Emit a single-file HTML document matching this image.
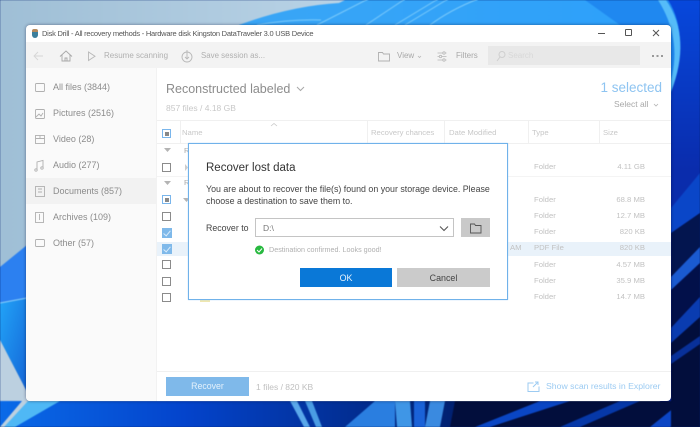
<!DOCTYPE html>
<html><head><meta charset="utf-8"><style>
*{box-sizing:border-box;margin:0;padding:0}
html,body{width:700px;height:427px;overflow:hidden;background:#02206e}
body{font-family:"Liberation Sans",sans-serif;position:relative}
#bg{position:absolute;left:0;top:0;filter:blur(.6px)}
#win{position:absolute;left:26px;top:25px;width:645px;height:376px;background:#fff;border-radius:4px;overflow:hidden;box-shadow:0 0 3px rgba(0,0,40,.45);filter:blur(.3px)}
.t{position:absolute;white-space:nowrap;line-height:12px}
.a{position:absolute}
svg{position:absolute;overflow:visible}
.side{font-size:9px;color:#8c8c8c}
.rowt{font-size:7.7px;color:#c2c2c2}
.cb{position:absolute;left:162px;width:9px;height:9px;border:1.2px solid #8b8b8b;background:#fff}
.cbb{border:1.2px solid #7ab6ec;background:#fff}
.cbb i{position:absolute;left:1.5px;top:1.5px;width:4px;height:4px;background:#888}
.cbc{border:0;background:#7fb9ea;width:10px;height:10px}
.cbc:after{content:"";position:absolute;left:3px;top:1px;width:3px;height:6px;border:solid #d9ecfb;border-width:0 1.2px 1.2px 0;transform:rotate(40deg)}
</style></head><body>
<svg id="bg" width="700" height="427" viewBox="0 0 700 427">
<defs>
<linearGradient id="lt" x1="0" y1="0" x2="1" y2="0"><stop offset="0" stop-color="#9fbfd6"/><stop offset=".55" stop-color="#bcd5e8"/><stop offset="1" stop-color="#c2d8ea"/></linearGradient>
<linearGradient id="rt" x1="0" y1="0" x2="0" y2="1"><stop offset="0" stop-color="#0748dc"/><stop offset=".4" stop-color="#0a2cac"/><stop offset="1" stop-color="#0a2aa8"/></linearGradient>
<linearGradient id="bot" x1="0" y1="0" x2="1" y2="0"><stop offset="0" stop-color="#0a6ae8"/><stop offset=".4" stop-color="#0444cc"/><stop offset="1" stop-color="#01206e"/></linearGradient>
<linearGradient id="bl" x1="0" y1="0" x2="1" y2="0"><stop offset="0" stop-color="#3aa6f6"/><stop offset="1" stop-color="#2ca0fb"/></linearGradient>
<linearGradient id="lo" x1="0" y1="0" x2="1" y2="1"><stop offset="0" stop-color="#22a4f8"/><stop offset="1" stop-color="#1464d6"/></linearGradient>
</defs>
<rect width="700" height="427" fill="url(#lt)"/>
<!-- top bloom -->
<rect x="660" y="0" width="40" height="427" fill="url(#rt)"/>
<path d="M239 25 Q290 6 339 3 L345 0 L668 0 Q690 35 671 90 L671 100 L239 100Z" fill="url(#bl)"/>
<path d="M585 0 L668 0 Q690 35 671 90 L671 100 L620 100 L620 25Z" fill="#1f88f0"/>
<path d="M666 0 Q692 38 671 92 L671 80 Q682 38 658 0Z" fill="#55bcf9"/>
<g stroke="#8cd4fc" stroke-width="1" fill="none" opacity=".8">
<path d="M317 25 L370 -2"/><path d="M366 25 L405 -1"/><path d="M395 25 L438 -1"/><path d="M405 25 L448 -1"/><path d="M430 25 Q450 10 478 -1"/><path d="M257 25 Q290 19 321 20"/>
</g>
<!-- left -->
<path d="M0 267 L27 245 L27 298 L0 303Z" fill="#2c80f0"/>
<path d="M0 303 L27 298 L27 392 L0 340Z" fill="url(#lo)"/>
<path d="M0 303 L27 298" stroke="#8cd0fa" stroke-width="1"/>
<path d="M0 340 L27 392 L27 401 L0 427Z" fill="#bcd0e0"/>
<!-- bottom -->
<rect x="0" y="401" width="460" height="26" fill="url(#bot)"/>
<path d="M0 427 L26 401 L60 401 L15 427Z" fill="#4fb8f5"/>
<path d="M0 427 L22 401 L28 401 L4 427Z" fill="#bcd0e0"/>
<path d="M290 401 L297 401 L310 427 L304 427Z" fill="#5aa8ea"/>
<path d="M305 401 L312 401 L322 427 L316 427Z" fill="#4a9ce4"/>
<path d="M345 427 L375 401 L395 401 L395 427Z" fill="#2a7ee0"/>
<path d="M395 401 L410 401 L412 427 L397 427Z" fill="#3f96e6"/>
<path d="M414 401 L425 401 L425 427 L414 427Z" fill="#1a62d8"/>
<path d="M430 401 L445 401 L440 427 L425 427Z" fill="#3a8ae0"/>
<path d="M455 401 L700 401 L700 427 L450 427Z" fill="#020e3c"/>
<path d="M475 427 L540 401 L570 401 L490 427Z" fill="#0a46c4"/>
<path d="M560 427 L620 401 L640 401 L580 427Z" fill="#0638a8"/>
<path d="M650 427 L690 395 L700 390 L700 410 L670 427Z" fill="#0c46c4"/>
<!-- right bands -->
<path d="M671 208 L700 173 L700 213 L671 233Z" fill="#0a46c8"/>
<path d="M671 233 L700 213 L700 247 L671 277Z" fill="#03154f"/>
<path d="M671 277 L700 247 L700 263 L671 290Z" fill="#1a5ad0"/>
<path d="M671 290 L700 263 L700 297 L671 328Z" fill="#02104a"/>
<path d="M671 328 L700 297 L700 317 L671 343Z" fill="#0a3cb0"/>
<path d="M671 343 L700 317 L700 427 L671 427Z" fill="#020e3c"/>
<path d="M671 356 L700 336 L700 344 L671 364Z" fill="#083099"/>
</svg>

<div id="win">
<div class="a" style="left:0;top:17px;width:645px;height:26px;background:#f3f3f3"></div>
<div class="a" style="left:0;top:43px;width:130px;height:333px;background:#fafafa"></div>
<div class="a" style="left:0;top:153px;width:130px;height:26px;background:#f2f2f2"></div>

<!-- title bar -->
<div class="a" style="left:6px;top:4px;width:6px;height:5px;background:#b5895c;border-radius:2px 2px 0 0"></div>
<div class="a" style="left:6px;top:7px;width:6px;height:6px;background:#3c7f9c;border-radius:0 0 3px 3px"></div>
<div class="t" style="left:16px;top:3px;font-size:7.5px;letter-spacing:-.24px;color:#555">Disk Drill - All recovery methods - Hardware disk Kingston DataTraveler 3.0 USB Device</div>
<div class="a" style="left:572px;top:8px;width:7px;height:1px;background:#555"></div>
<div class="a" style="left:599px;top:4px;width:7px;height:7px;border:1px solid #555;border-radius:1px"></div>
<svg style="left:0;top:0" width="645" height="20"><path d="M627 5l6 6m0-6l-6 6" stroke="#555" stroke-width="1" fill="none"/></svg>

<!-- toolbar icons -->
<svg style="left:0;top:0" width="645" height="70" fill="none" stroke="#bdbdbd" stroke-width=".9">
<path d="M17 31h-9m4-4l-4 4 4 4" stroke="#d6d6d6"/>
<path d="M34 31.500l6-5.500 6 5.500m-10-1.500v6h8v-6m-5 6v-3h2v3" stroke="#a8a8a8"/>
<path d="M62.500 27v8.500l6.500-4.200z" stroke="#b8b8b8"/>
<circle cx="161" cy="32" r="5" stroke="#b8b8b8"/>
<path d="M161 25v9m-2-2l2 2 2-2" stroke="#b8b8b8"/>
<path d="M352.500 27.500h4l1 1.500h6v7h-11z" stroke="#b0b0b0"/>
<path d="M392 31l1.500 1.500 1.500-1.500" stroke="#b8b8b8" stroke-width=".8"/>
<path d="M411.500 28h9m-9 3.500h9m-9 3.500h9" stroke="#b8b8b8" stroke-width=".8"/>
<circle cx="418" cy="28" r="1.200" fill="#f3f3f3" stroke="#b8b8b8" stroke-width=".8"/>
<circle cx="414.500" cy="31.500" r="1.200" fill="#f3f3f3" stroke="#b8b8b8" stroke-width=".8"/>
<circle cx="418" cy="35" r="1.200" fill="#f3f3f3" stroke="#b8b8b8" stroke-width=".8"/>
</svg>
<div class="t" style="left:78px;top:25px;font-size:8px;color:#b0b0b0">Resume scanning</div>
<div class="t" style="left:175px;top:25px;font-size:7.900px;color:#b0b0b0">Save session as...</div>
<div class="t" style="left:371px;top:25px;font-size:8px;color:#a8a8a8">View</div>
<div class="t" style="left:430px;top:25px;font-size:8px;color:#a8a8a8">Filters</div>
<div class="a" style="left:462px;top:21px;width:152px;height:19px;background:#e8e8e8"></div>
<svg style="left:0;top:0" width="645" height="70" fill="none"><circle cx="476" cy="29.500" r="3" stroke="#cfcfcf"/><path d="M474 32l-3 4" stroke="#cfcfcf"/></svg>
<div class="t" style="left:482px;top:25px;font-size:8px;color:#d8d8d8">Search</div>
<div class="a" style="left:626px;top:30px;width:1.500px;height:1.500px;background:#999;box-shadow:4.500px 0 #999,9px 0 #999"></div>

<!-- sidebar -->
<svg style="left:0;top:0" width="130" height="240" fill="none" stroke="#b0b0b0" stroke-width=".9">
<rect x="9.500" y="58.500" width="9" height="8" rx="1"/>
<rect x="9.500" y="84.500" width="9" height="9" rx="1"/><path d="M10 92l3-3 2 2 2-3"/>
<rect x="9.500" y="110.500" width="9" height="8"/><path d="M9.500 113.500h9M14 110.500v3"/>
<path d="M11 145v-8l6-1.500v7"/><circle cx="10" cy="145" r="1.200"/><circle cx="16" cy="143" r="1.200"/>
<rect x="9.500" y="161.500" width="9" height="10"/><path d="M12 164h4M12 167h4"/>
<rect x="9.500" y="187.500" width="8" height="10"/><path d="M13.500 189v6"/>
<rect x="9.500" y="214.500" width="9" height="7" rx="1"/>
</svg>
<div class="t side" style="left:27px;top:56px">All files (3844)</div>
<div class="t side" style="left:27px;top:82px">Pictures (2516)</div>
<div class="t side" style="left:27px;top:108px">Video (28)</div>
<div class="t side" style="left:27px;top:134px">Audio (277)</div>
<div class="t side" style="left:27px;top:160px">Documents (857)</div>
<div class="t side" style="left:27px;top:186px">Archives (109)</div>
<div class="t side" style="left:27px;top:212px">Other (57)</div>

<!-- main header -->
<div class="t" style="left:140px;top:58px;font-size:12.500px;color:#8c8c8c">Reconstructed labeled</div>
<svg style="left:0;top:0" width="300" height="80" fill="none"><path d="M271 62l3.500 3.500 3.500-3.500" stroke="#a8a8a8"/></svg>
<div class="t" style="left:140px;top:77px;font-size:8.500px;color:#c8c8c8">857 files / 4.18 GB</div>
<div class="t" style="right:9px;top:57px;font-size:13.500px;color:#8ec4f1">1 selected</div>
<div class="t" style="left:588px;top:73px;font-size:8.500px;color:#a8a8a8">Select all</div>
<svg style="left:0;top:0" width="645" height="90" fill="none"><path d="M628 79l2 2 2-2" stroke="#b4b4b4" stroke-width=".8"/></svg>

<!-- table header -->
<div class="a" style="left:130px;top:95px;width:515px;height:1px;background:#f0f0f0"></div>
<div class="a" style="left:130px;top:118px;width:515px;height:1px;background:#f0f0f0"></div>
<div class="a" style="left:154px;top:95px;width:1px;height:23px;background:#f0f0f0"></div>
<div class="a" style="left:341px;top:95px;width:1px;height:23px;background:#f0f0f0"></div>
<div class="a" style="left:418px;top:95px;width:1px;height:23px;background:#f0f0f0"></div>
<div class="a" style="left:502px;top:95px;width:1px;height:23px;background:#f0f0f0"></div>
<div class="a" style="left:573px;top:95px;width:1px;height:23px;background:#f0f0f0"></div>
<svg style="left:0;top:0" width="300" height="110" fill="none"><path d="M245 101l3-2.500 3 2.500" stroke="#c8c8c8" stroke-width=".8"/></svg>
<div class="t rowt" style="left:156px;top:102px;color:#c8c8c8">Name</div>
<div class="t rowt" style="left:345px;top:102px;color:#c8c8c8">Recovery chances</div>
<div class="t rowt" style="left:423px;top:102px;color:#c8c8c8">Date Modified</div>
<div class="t rowt" style="left:506px;top:102px;color:#c8c8c8">Type</div>
<div class="t rowt" style="left:577px;top:102px;color:#c8c8c8">Size</div>

<!-- rows -->
<div class="a" style="left:130px;top:217px;width:515px;height:13.500px;background:#e9f2fa"></div>
<div class="a" style="left:130px;top:151px;width:515px;height:1px;background:#f4f4f4"></div>
<div class="cb cbb" style="left:136px;top:104px"><i></i></div>
<svg style="left:0;top:0" width="200" height="200" fill="#b4b4b4"><path d="M138 123h7l-3.500 4zM138 156h7l-3.500 4zM157 173h7l-3.500 4z"/><path d="M159 139v7l3-3.500z" fill="#ccc"/></svg>
<div class="t rowt" style="left:158px;top:120px;color:#a8a8a8">R</div>
<div class="t rowt" style="left:158px;top:152px;color:#a8a8a8">R</div>
<div class="cb" style="left:136px;top:138px"></div>
<div class="cb cbb" style="left:136px;top:170px"><i></i></div>
<div class="cb" style="left:136px;top:187px"></div>
<div class="cb cbc" style="left:136px;top:203px"></div>
<div class="cb cbc" style="left:136px;top:219px"></div>
<div class="cb" style="left:136px;top:235px"></div>
<div class="cb" style="left:136px;top:252px"></div>
<div class="cb" style="left:136px;top:268px"></div>

<div class="t rowt" style="left:508px;top:136px">Folder</div><div class="t rowt" style="right:26px;top:136px">4.11 GB</div>
<div class="t rowt" style="left:508px;top:169px">Folder</div><div class="t rowt" style="right:26px;top:169px">68.8 MB</div>
<div class="t rowt" style="left:508px;top:185px">Folder</div><div class="t rowt" style="right:26px;top:185px">12.7 MB</div>
<div class="t rowt" style="left:508px;top:201px">Folder</div><div class="t rowt" style="right:26px;top:201px">820 KB</div>
<div class="t rowt" style="left:508px;top:217px">PDF File</div><div class="t rowt" style="right:26px;top:217px">820 KB</div>
<div class="t rowt" style="left:484px;top:217px">AM</div>
<div class="t rowt" style="left:508px;top:234px">Folder</div><div class="t rowt" style="right:26px;top:234px">4.57 MB</div>
<div class="t rowt" style="left:508px;top:250px">Folder</div><div class="t rowt" style="right:26px;top:250px">35.9 MB</div>
<div class="t rowt" style="left:508px;top:266px">Folder</div><div class="t rowt" style="right:26px;top:266px">14.7 MB</div>

<!-- bottom bar -->
<div class="a" style="left:130px;top:346px;width:515px;height:1px;background:#f0f0f0"></div>
<div class="a" style="left:130px;top:43px;width:1px;height:333px;background:#f2f2f2"></div>
<div class="a" style="left:140px;top:352px;width:83px;height:19px;background:#7fb9ea"></div>
<div class="t" style="left:140px;width:83px;text-align:center;top:355px;font-size:8.800px;color:#e4f1fb">Recover</div>
<div class="t" style="left:230px;top:356px;font-size:8.500px;color:#c0c0c0">1 files / 820 KB</div>
<svg style="left:0;top:0" width="645" height="376" fill="none" stroke="#9ccbf2"><path d="M507.500 358h-5.500v8.500h11v-5"/><path d="M507 362l5-5m-3 0h3v3"/></svg>
<div class="t" style="left:520px;top:355px;font-size:8.700px;color:#9ccbf2">Show scan results in Explorer</div>

<!-- dialog -->
<div class="a" style="left:174px;top:273px;width:10px;height:4px;background:#efe7b0"></div>
<div class="a" style="left:162px;top:118px;width:320px;height:157px;background:#fff;border:1px solid #70b2ea;box-shadow:0 0 1px #a8d2f4"></div>
<div class="t" style="left:180px;top:137px;font-size:11.500px;color:#333">Recover lost data</div>
<div class="t" style="left:180px;top:158px;font-size:8.850px;color:#444">You are about to recover the file(s) found on your storage device. Please</div>
<div class="t" style="left:180px;top:170px;font-size:8.850px;color:#444">choose a destination to save them to.</div>
<div class="t" style="left:180px;top:197px;font-size:8.800px;color:#444">Recover to</div>
<div class="a" style="left:229px;top:193px;width:199px;height:19px;border:1px solid #c4c4c4;background:#fff"></div>
<div class="t" style="left:237px;top:197px;font-size:8.500px;color:#777">D:\</div>
<svg style="left:0;top:0" width="645" height="376" fill="none"><path d="M414 201.500l4 4 4-4" stroke="#555" stroke-width="1.100"/></svg>
<div class="a" style="left:435px;top:193px;width:29px;height:19px;background:#c9c9c9"></div>
<svg style="left:0;top:0" width="645" height="376" fill="none"><path d="M444.500 199h4l1 1.500h5.500v7.500h-10.500z" stroke="#555" stroke-width=".9"/></svg>
<svg style="left:0;top:0" width="645" height="376"><circle cx="233.500" cy="225" r="4.500" fill="#27b93f"/><path d="M231 225l2 2 3-3.500" stroke="#fff" stroke-width="1" fill="none"/></svg>
<div class="t" style="left:243px;top:219px;font-size:7.200px;color:#b0b0b0">Destination confirmed. Looks good!</div>
<div class="a" style="left:274px;top:243px;width:92px;height:19px;background:#0a78d7"></div>
<div class="t" style="left:274px;width:92px;text-align:center;top:247px;font-size:8.900px;color:#e8f3fc">OK</div>
<div class="a" style="left:371px;top:243px;width:93px;height:19px;background:#cbcbcb"></div>
<div class="t" style="left:371px;width:93px;text-align:center;top:247px;font-size:8.900px;color:#444">Cancel</div>
</div>
</body></html>
